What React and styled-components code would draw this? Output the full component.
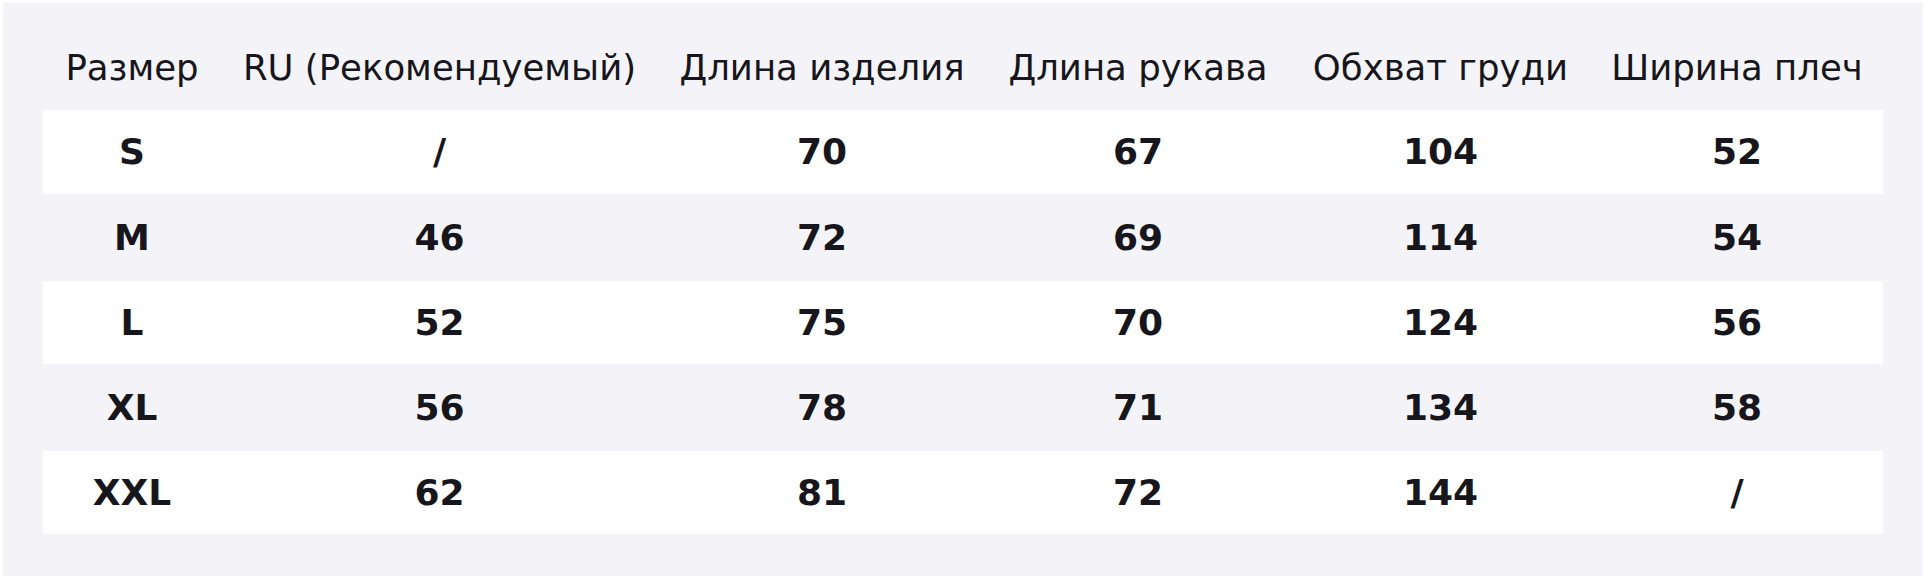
import React from "react";
import styled, { createGlobalStyle } from "styled-components";

const Global = createGlobalStyle`
  html, body { margin: 0; padding: 0; background: #ffffff; }
  body { font-family: "DejaVu Sans", "Noto Sans", sans-serif; color: #16161c; }
`;

const Panel = styled.div`
  margin: 3px;
  width: 1920px;
  box-sizing: border-box;
  padding: 40px;
  background: #f4f4f8;
`;

const Table = styled.table`
  width: 1840px;
  table-layout: fixed;
  border-collapse: collapse;
  border-spacing: 0;
  font-size: 35.5px;
  line-height: 42px;
`;

const Col = styled.col`
  width: ${(p) => p.$w}px;
`;

const HeadCell = styled.th`
  font-weight: 400;
  text-align: center;
  vertical-align: top;
  white-space: nowrap;
  padding: 4px 0 21px;
  color: #16161c;
`;

const Cell = styled.td`
  font-size: 36px;
  font-weight: 700;
  text-align: center;
  vertical-align: middle;
  white-space: nowrap;
  height: 85px;
  padding: 0;
  box-sizing: border-box;
  background: ${(p) => (p.$striped ? "#ffffff" : "transparent")};
  border-bottom: 2px solid #f4f4f8;
  color: #16161c;
`;

const widths = [178, 437, 328, 304, 301, 292];

const headers = [
  "Размер",
  "RU (Рекомендуемый)",
  "Длина изделия",
  "Длина рукава",
  "Обхват груди",
  "Ширина плеч",
];

const rows = [
  ["S", "/", "70", "67", "104", "52"],
  ["M", "46", "72", "69", "114", "54"],
  ["L", "52", "75", "70", "124", "56"],
  ["XL", "56", "78", "71", "134", "58"],
  ["XXL", "62", "81", "72", "144", "/"],
];

export default function App() {
  return (
    <>
      <Global />
      <Panel>
        <Table>
          <colgroup>
            {widths.map((w, i) => (
              <Col key={i} $w={w} />
            ))}
          </colgroup>
          <thead>
            <tr>
              {headers.map((h) => (
                <HeadCell key={h}>{h}</HeadCell>
              ))}
            </tr>
          </thead>
          <tbody>
            {rows.map((r, i) => (
              <tr key={r[0]}>
                {r.map((c, j) => (
                  <Cell key={j} $striped={i % 2 === 0}>
                    {c}
                  </Cell>
                ))}
              </tr>
            ))}
          </tbody>
        </Table>
      </Panel>
    </>
  );
}
